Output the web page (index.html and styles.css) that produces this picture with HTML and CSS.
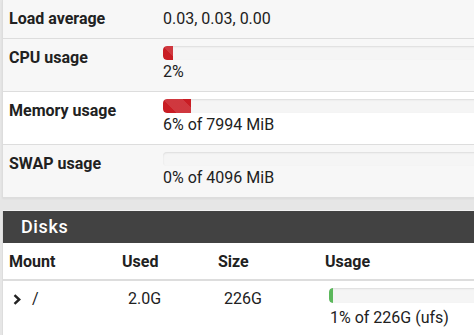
FILE: index.html
```html
<!DOCTYPE html>
<html lang="en">
<head>
  <meta charset="UTF-8">
  <title>Dashboard</title>
  <link rel="stylesheet" href="styles.css">
</head>
<body>
  <div class="panel info">
    <table class="info-table">
      <tr class="stripe">
        <th>Load average</th>
        <td>0.03, 0.03, 0.00</td>
      </tr>
      <tr class="stripe">
        <th>CPU usage</th>
        <td>
          <div class="progress"><div class="bar red" style="width: 10px"></div></div>
          <span>2%</span>
        </td>
      </tr>
      <tr>
        <th>Memory usage</th>
        <td>
          <div class="progress"><div class="bar red" style="width: 28px"></div></div>
          <span>6% of 7994 MiB</span>
        </td>
      </tr>
      <tr class="stripe">
        <th>SWAP usage</th>
        <td>
          <div class="progress"><div class="bar red" style="width: 0"></div></div>
          <span>0% of 4096 MiB</span>
        </td>
      </tr>
    </table>
  </div>

  <div class="panel disks">
    <div class="panel-heading">Disks</div>
    <table class="disk-table">
      <thead>
        <tr>
          <th class="c-mount">Mount</th>
          <th class="c-used">Used</th>
          <th class="c-size">Size</th>
          <th>Usage</th>
        </tr>
      </thead>
      <tbody>
        <tr>
          <td>
            <div class="mount">
              <svg class="chevron" width="8" height="11" viewBox="0 0 8 11"><path d="M1.5 1.2 L6.2 5.5 L1.5 9.8" fill="none" stroke="#222" stroke-width="2.4"/></svg>
              <span>/</span>
            </div>
          </td>
          <td><span class="shift">2.0G</span></td>
          <td><span class="shift">226G</span></td>
          <td>
            <div class="progress"><div class="bar green" style="width: 4px"></div></div>
            <span class="usage-text">1% of 226G (ufs)</span>
          </td>
        </tr>
      </tbody>
    </table>
  </div>
</body>
</html>
```

FILE: styles.css
```css
body {
  margin: 0;
  padding: 0 0 0 2px;
  background-color: #e6e6e6;
  font-family: Roboto, "Liberation Sans", sans-serif;
  font-size: 16px;
  color: #212121;
  overflow: hidden;
}

.panel {
  width: 520px;
  background-color: #fff;
  border-left: 1px solid #ddd;
}

.info {
  border-bottom: 1px solid #ddd;
  box-shadow: 0 1px 2px rgba(0, 0, 0, 0.05);
}

.disks {
  margin-top: 12px;
  border-top: 1px solid #f2f2f2;
}

table {
  width: 100%;
  border-collapse: collapse;
  table-layout: fixed;
}

.info-table th,
.info-table td {
  padding: 8px 6px;
  line-height: 22px;
  text-align: left;
  vertical-align: top;
  border-bottom: 1px solid #ddd;
}

.info-table tr:last-child th,
.info-table tr:last-child td {
  border-bottom: none;
}

.info-table th {
  width: 142px;
  font-weight: bold;
}

.info-table td .progress {
  margin-top: -1px;
}

.info-table span,
.disk-table span {
  display: block;
}

.stripe {
  background-color: #f7f7f7;
}

.progress {
  height: 14px;
  margin-bottom: 1px;
  background-color: #f5f5f5;
  border-radius: 4px;
  box-shadow: inset 0 1px 2px rgba(0, 0, 0, 0.1);
  overflow: hidden;
}

.bar {
  height: 100%;
  border-radius: 4px 0 0 4px;
}

.bar.red {
  background-color: #c91d24;
  background-image: linear-gradient(45deg, rgba(255, 255, 255, 0.12) 25%, transparent 25%, transparent 50%, rgba(255, 255, 255, 0.12) 50%, rgba(255, 255, 255, 0.12) 75%, transparent 75%, transparent);
  background-size: 40px 40px;
}

.bar.green {
  background-color: #5cb85c;
}

.panel-heading {
  height: 32px;
  line-height: 32px;
  padding-left: 18px;
  background-color: #424242;
  color: #fff;
  font-size: 18px;
  font-weight: 500;
  letter-spacing: 0.6px;
}

.disk-table th {
  height: 36px;
  padding: 0 6px;
  text-align: left;
  font-weight: bold;
  border-bottom: 2px solid #ddd;
}

.disk-table td {
  padding: 7px 6px 8px;
  line-height: 22px;
  vertical-align: top;
}

.c-mount {
  width: 101px;
}

.c-used {
  width: 84px;
}

.c-size {
  width: 95px;
}

.mount {
  display: flex;
  align-items: center;
  gap: 11px;
  padding-left: 4px;
}

.disk-table td .progress {
  height: 15px;
  margin-top: 0;
  margin-bottom: 4px;
  margin-left: 4px;
}

.usage-text {
  margin-left: 5px;
}

.shift {
  padding-left: 6px;
}
```
